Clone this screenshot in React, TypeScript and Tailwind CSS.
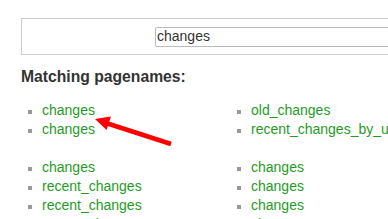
import React from 'react'

const groups: [string, string][][] = [
  [
    ['changes', 'old_changes'],
    ['changes', 'recent_changes_by_user'],
  ],
  [
    ['changes', 'changes'],
    ['recent_changes', 'changes'],
    ['recent_changes', 'changes'],
    ['recent_changes', 'changes'],
  ],
]

const Item: React.FC<{ name: string }> = ({ name }) => (
  <div className="flex h-[19px] items-center whitespace-nowrap pl-[7px]">
    <span className="mr-[10px] mt-[2px] h-[4px] w-[4px] shrink-0 bg-[#999999]" />
    <a className="text-[14px] text-[#1f9b1f]">{name}</a>
  </div>
)

const App: React.FC = () => {
  return (
    <div
      className="relative h-[219px] w-[388px] overflow-hidden bg-white pl-[21px] text-[#333333]"
      style={{ fontFamily: '"Liberation Sans", Arial, sans-serif' }}
    >
      <div className="h-[18px]" />
      <div className="flex h-[37px] w-[420px] items-center border border-[#cccccc] pl-[133px]">
        <div className="flex h-[20px] w-[300px] items-center rounded-[2px] border border-[#bbbbbb] pl-[1px] text-[14px] text-[#333333]">
          changes
        </div>
      </div>
      <h2 className="mt-[12px] text-[15.7px] font-bold leading-[20px] text-[#333333]">Matching pagenames:</h2>
      <div className="mt-[14px]">
        {groups.map((rows, gi) => (
          <div key={gi} className={gi > 0 ? 'mt-[19px]' : ''}>
            {rows.map(([left, right], ri) => (
              <div key={ri} className="grid grid-cols-[209px_209px]">
                <Item name={left} />
                <Item name={right} />
              </div>
            ))}
          </div>
        ))}
      </div>
      <svg className="absolute left-0 top-0" width="388" height="219" viewBox="0 0 388 219">
        <line x1="171" y1="144" x2="106" y2="123" stroke="#ff0000" strokeWidth="4.5" />
        <polygon points="95,119 111,116.5 106.5,130" fill="#ff0000" />
      </svg>
    </div>
  )
}

export default App
